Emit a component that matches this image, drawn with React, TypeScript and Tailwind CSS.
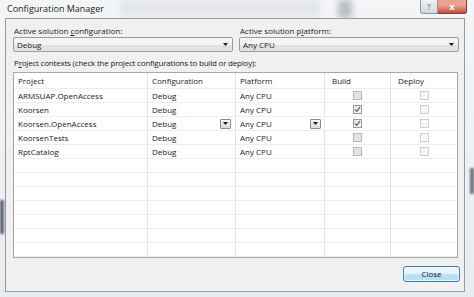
import React from "react";

type Row = { project: string; build: "off" | "on"; dropdown?: boolean };

const rows: Row[] = [
  { project: "ARMSUAP.OpenAccess", build: "off" },
  { project: "Koorsen", build: "on" },
  { project: "Koorsen.OpenAccess", build: "on", dropdown: true },
  { project: "KoorsenTests", build: "off" },
  { project: "RptCatalog", build: "off" },
];

function Arrow() {
  return (
    <svg width="5" height="3" viewBox="0 0 5 3" className="shrink-0">
      <path d="M0 0H5L2.5 3Z" fill="#1a1a1a" />
    </svg>
  );
}

function Combo({ value }: { value: string }) {
  return (
    <div className="flex h-[15px] items-center justify-between rounded-[2px] border border-[#9c9c9c] bg-gradient-to-b from-[#f4f4f4] from-50% to-[#e2e2e2] to-50% pl-[3px] pr-[4px]">
      <span className="leading-none">{value}</span>
      <Arrow />
    </div>
  );
}

function CellDrop() {
  return (
    <div className="flex h-[10px] w-[11px] items-center justify-center rounded-[1px] border border-[#8d8d8d] bg-gradient-to-b from-[#f6f6f6] to-[#dcdcdc]">
      <Arrow />
    </div>
  );
}

function Check({ state }: { state: "off" | "on" | "none" }) {
  if (state === "on") {
    return (
      <div className="flex h-[9px] w-[9px] items-center justify-center border border-[#9a9a9a] bg-gradient-to-br from-[#e4e4e4] to-[#fafafa]">
        <svg width="7" height="7" viewBox="0 0 7 7">
          <path d="M1 3.6L2.8 5.4L6 1" stroke="#4b5a7a" strokeWidth="1.2" fill="none" />
        </svg>
      </div>
    );
  }
  if (state === "off") {
    return <div className="h-[9px] w-[9px] border border-[#b8b8b8] bg-[#e4e4e4]" />;
  }
  return <div className="h-[9px] w-[9px] border border-[#cfcfcf] bg-[#f7f7f7]" />;
}

function GridRow({ children, header }: { children: React.ReactNode; header?: boolean }) {
  return (
    <div
      className={`grid shrink-0 grid-cols-[134px_88px_89px_66px_1fr] border-b border-[#ededed] ${
        header ? "h-[16px]" : "h-[14px]"
      }`}
    >
      {children}
    </div>
  );
}

function Cell({ children, className = "" }: { children?: React.ReactNode; className?: string }) {
  return <div className={`flex items-center border-r border-[#e2e2e2] ${className}`}>{children}</div>;
}

export default function App() {
  return (
    <div className="relative flex h-[297px] w-[474px] flex-col overflow-hidden bg-gradient-to-b from-[#f3f5f7] to-[#e9ecef] font-['Open_Sans','Noto_Sans',sans-serif] text-[8px] text-[#1b1b1b]">
      {/* glass smears */}
      <div className="absolute left-[338px] top-0 h-[18px] w-[14px] bg-[#b9bec4] blur-[3px]" />
      <div className="absolute left-[120px] top-0 h-[16px] w-[200px] bg-[#e2e5e8] blur-[4px]" />
      <div className="absolute left-0 top-[200px] h-[34px] w-[4px] bg-[#5d6776] blur-[1px]" />
      <div className="absolute right-0 top-[168px] h-[26px] w-[4px] bg-[#6c737c] blur-[1px]" />

      {/* title bar */}
      <div className="relative flex h-[18px] shrink-0 items-start justify-between">
        <span className="pl-[7px] pt-[3px] text-[9px] leading-[11px] text-[#222]">Configuration Manager</span>
        <div className="mr-[7px] flex">
          <div className="flex h-[14px] w-[18px] items-center justify-center rounded-bl-[3px] border border-t-0 border-[#8e99a6] bg-gradient-to-b from-[#eef1f4] to-[#d2d9e0] text-[8px] font-bold leading-none text-[#8994a0]">
            ?
          </div>
          <div className="flex h-[14px] w-[29px] items-center justify-center rounded-br-[3px] border border-l-0 border-t-0 border-[#8a3a3a] bg-gradient-to-b from-[#e8a493] from-40% to-[#c8473a] text-[9px] font-bold leading-none text-white">
            x
          </div>
        </div>
      </div>

      {/* client area */}
      <div className="relative ml-[5px] mr-[9px] flex flex-col border border-[#949ba3] bg-[#f0f0f0] pb-[9px] pl-[7px] pr-[5px] pt-[6px]">
        <div className="grid grid-cols-2 gap-[6px]">
          <div className="flex flex-col">
            <span className="h-[11px] pl-[1px] leading-[11px]">
              Active solution <span className="underline">c</span>onfiguration:
            </span>
            <div className="mt-[1px]">
              <Combo value="Debug" />
            </div>
          </div>
          <div className="flex flex-col">
            <span className="h-[11px] pl-[1px] leading-[11px]">
              Active solution p<span className="underline">l</span>atform:
            </span>
            <div className="mt-[1px]">
              <Combo value="Any CPU" />
            </div>
          </div>
        </div>

        <span className="mt-[5px] h-[11px] pl-[1px] leading-[11px] tracking-[-0.2px]">
          P<span className="underline">r</span>oject contexts (check the project configurations to build or deploy):
        </span>

        <div className="mr-[1px] mt-[4px] flex h-[186px] flex-col overflow-hidden border border-[#a8a8a8] bg-white">
          <GridRow header>
            <Cell className="pl-[4px]">Project</Cell>
            <Cell className="pl-[4px]">Configuration</Cell>
            <Cell className="pl-[4px]">Platform</Cell>
            <Cell className="pl-[7px]">Build</Cell>
            <Cell className="border-r-0 pl-[7px]">Deploy</Cell>
          </GridRow>
          {rows.map((r) => (
            <GridRow key={r.project}>
              <Cell className="pl-[4px]">{r.project}</Cell>
              <Cell className="justify-between pl-[4px] pr-[4px]">
                <span>Debug</span>
                {r.dropdown && <CellDrop />}
              </Cell>
              <Cell className="justify-between pl-[4px] pr-[3px]">
                <span>Any CPU</span>
                {r.dropdown && <CellDrop />}
              </Cell>
              <Cell className="justify-center">
                <Check state={r.build} />
              </Cell>
              <Cell className="justify-center border-r-0">
                <Check state="none" />
              </Cell>
            </GridRow>
          ))}
          {Array.from({ length: 8 }).map((_, i) => (
            <GridRow key={i}>
              <Cell />
              <Cell />
              <Cell />
              <Cell />
              <Cell className="border-r-0" />
            </GridRow>
          ))}
        </div>

        <div className="mt-[8px] flex justify-end">
          <button className="-mr-[1px] flex h-[16px] w-[57px] items-center justify-center rounded-[3px] border border-[#3c7fb1] bg-gradient-to-b from-[#eaf6fd] from-45% to-[#b6e0f8] to-55% text-[8px] leading-none text-[#1b1b1b] shadow-[inset_0_0_0_1px_rgba(255,255,255,0.6)]">
            Close
          </button>
        </div>
      </div>
    </div>
  );
}
